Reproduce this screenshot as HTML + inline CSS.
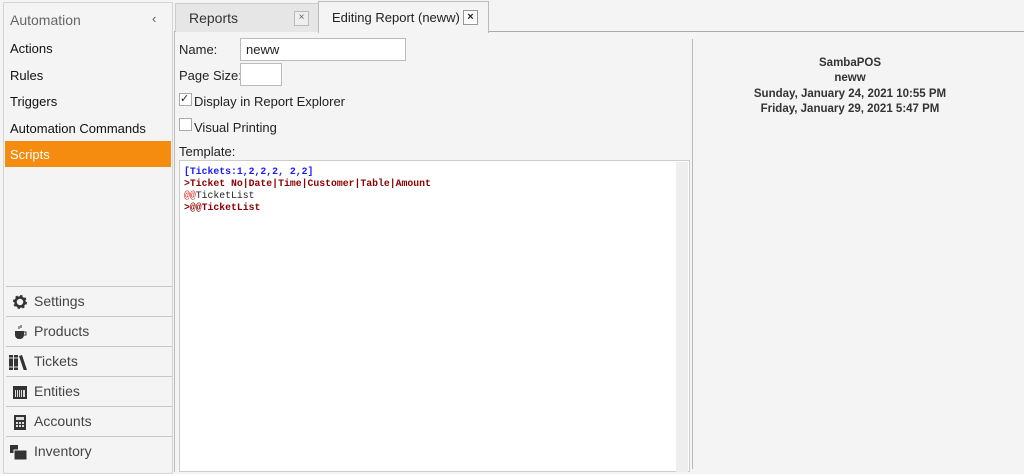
<!DOCTYPE html>
<html><head><style>
body{margin:0;width:1024px;height:467px;background:#f4f4f4;font-family:"Liberation Sans",sans-serif;font-size:13px;color:#222;position:relative;overflow:hidden}
.a{position:absolute}
.side{left:3px;top:2px;width:168px;height:470px;border:1px solid #d4d4d4;background:#f4f4f4}
.it{position:absolute;left:6px;font-size:13px;color:#111}
.bt{position:absolute;left:2px;width:166px;height:29px;border-top:1px solid #c8c8c8;font-size:14px;color:#444}
.bt span{position:absolute;left:28px;top:6px}
.bt svg{position:absolute;left:6px;top:7px}
.mono{font-family:"Liberation Mono",monospace;font-size:9.8px;font-weight:bold;line-height:12px}
</style></head><body>
<div class="a side">
 <div class="it" style="top:9px;font-size:14px;color:#666">Automation</div>
 <div class="it" style="left:148px;top:8px;color:#555">‹</div>
 <div class="it" style="top:38px">Actions</div>
 <div class="it" style="top:65px">Rules</div>
 <div class="it" style="top:91px">Triggers</div>
 <div class="it" style="top:118px">Automation Commands</div>
 <div class="a" style="left:1px;top:138px;width:166px;height:26px;background:#f68c0f"></div>
 <div class="it" style="top:144px;color:#fff">Scripts</div>
 <div class="bt" style="top:283px"><svg width="16" height="16" viewBox="0 0 16 16"><circle cx="8" cy="8" r="5.5" fill="none" stroke="#333" stroke-width="3" stroke-dasharray="2.2 2.1"/><circle cx="8" cy="8" r="4.5" fill="none" stroke="#333" stroke-width="2.5"/></svg><span>Settings</span></div>
 <div class="bt" style="top:313px"><svg width="16" height="16" viewBox="0 0 16 16"><path d="M3 7h9v4a4 4 0 0 1-4 4H7a4 4 0 0 1-4-4z" fill="#333"/><path d="M12 8h2v3h-2" fill="none" stroke="#333"/><path d="M7 2v3M9 1v3" stroke="#333"/></svg><span>Products</span></div>
 <div class="bt" style="top:343px"><svg width="20" height="16" viewBox="0 0 20 16" style="left:3px"><rect x="0" y="1" width="4" height="15" fill="#333"/><rect x="5" y="1" width="4" height="15" fill="#333"/><path d="M10 2l3-1 5 15-3 1z" fill="#333"/><path d="M0 4h9M0 13h9" stroke="#ddd"/></svg><span>Tickets</span></div>
 <div class="bt" style="top:373px"><svg width="16" height="16" viewBox="0 0 16 16"><rect x="1" y="2" width="14" height="13" fill="#333"/><rect x="3" y="6" width="10" height="7" fill="#ddd"/><path d="M4.5 6v7M6.5 6v7M8.5 6v7M10.5 6v7" stroke="#333"/></svg><span>Entities</span></div>
 <div class="bt" style="top:403px"><svg width="16" height="16" viewBox="0 0 16 16"><rect x="2" y="1" width="12" height="15" fill="#333"/><rect x="4" y="3" width="8" height="3" fill="#ddd"/><path d="M4 8h2v2H4zM7 8h2v2H7zM10 8h2v2h-2zM4 11h2v2H4zM7 11h2v2H7zM10 11h2v2h-2z" fill="#ddd"/></svg><span>Accounts</span></div>
 <div class="bt" style="top:433px"><svg width="20" height="16" viewBox="0 0 20 16" style="left:3px"><rect x="1" y="1" width="8" height="8" fill="#333"/><rect x="5" y="6" width="13" height="10" fill="#333" stroke="#f4f4f4"/></svg><span>Inventory</span></div>
</div>
<div class="a" style="left:174px;top:31px;width:850px;height:1px;background:#aaa"></div>
<div class="a" style="left:175px;top:3px;width:142px;height:28px;background:#e6e6e6;border:1px solid #ccc;border-bottom:none"></div>
<div class="a" style="left:189px;top:10px;font-size:14px;color:#333">Reports</div>
<div class="a" style="left:294px;top:11px;width:13px;height:13px;border:1px solid #bbb;background:#eee;font-size:10px;line-height:12px;text-align:center;color:#666">×</div>
<div class="a" style="left:318px;top:1px;width:169px;height:31px;background:#f4f4f4;border:1px solid #bbb;border-bottom:none"></div>
<div class="a" style="left:332px;top:10px;font-size:13px;color:#222;white-space:nowrap">Editing Report (neww)</div>
<div class="a" style="left:463px;top:10px;width:13px;height:13px;border:1px solid #999;background:#fff;font-size:11px;font-weight:bold;line-height:12px;text-align:center">×</div>
<div class="a" style="left:174px;top:32px;width:1px;height:440px;background:#bbb"></div>
<div class="a" style="left:179px;top:42px">Name:</div>
<div class="a" style="left:240px;top:38px;width:164px;height:21px;background:#fff;border:1px solid #bbb"></div>
<div class="a" style="left:246px;top:42px">neww</div>
<div class="a" style="left:179px;top:68px">Page Size:</div>
<div class="a" style="left:240px;top:63px;width:40px;height:21px;background:#fff;border:1px solid #bbb"></div>
<div class="a" style="left:179px;top:93px;width:11px;height:11px;border:1px solid #aaa;background:#fff;font-size:11px;line-height:10px">✓</div>
<div class="a" style="left:194px;top:94px">Display in Report Explorer</div>
<div class="a" style="left:179px;top:118px;width:11px;height:11px;border:1px solid #aaa;background:#fff"></div>
<div class="a" style="left:194px;top:120px">Visual Printing</div>
<div class="a" style="left:179px;top:144px">Template:</div>
<div class="a" style="left:179px;top:160px;width:509px;height:310px;background:#fff;border:1px solid #ccc"></div>
<div class="a" style="left:676px;top:162px;width:12px;height:310px;background:#eee"></div>
<div class="a mono" style="left:184px;top:166px"><span style="color:#1a1aff">[Tickets:1,2,2,2, 2,2]</span><br><span style="color:#8b0000">&gt;Ticket No|Date|Time|Customer|Table|Amount</span><br><span style="color:#e03030;font-weight:normal">@@</span><span style="color:#222;font-weight:normal">TicketList</span><br><span style="color:#8b0000">&gt;@@TicketList</span></div>
<div class="a" style="left:692px;top:39px;width:1px;height:430px;background:#bbb"></div>
<div class="a" style="left:693px;top:56px;width:314px;text-align:center;font-weight:bold;font-size:11.5px;line-height:15.3px;color:#333">SambaPOS<br>neww<br>Sunday, January 24, 2021 10:55 PM<br>Friday, January 29, 2021 5:47 PM</div>
</body></html>
